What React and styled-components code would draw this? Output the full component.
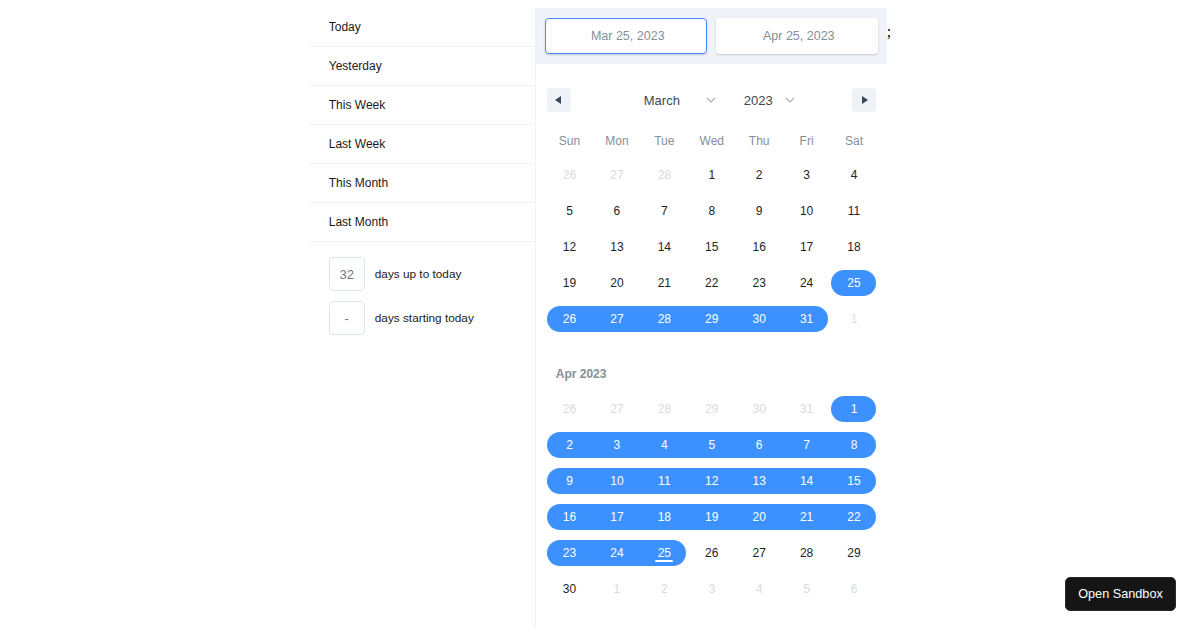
import React from "react";
import styled, { createGlobalStyle } from "styled-components";

const BLUE = "#3d91ff";

const GlobalStyle = createGlobalStyle`
  body {
    margin: 8px;
    background: #fff;
    font-family: "Liberation Sans", Arial, sans-serif;
  }
`;

const Page = styled.div`
  display: flex;
  justify-content: center;
  align-items: flex-start;
`;

const Picker = styled.div`
  display: flex;
  align-items: stretch;
`;

const Sidebar = styled.div`
  width: 226px;
  border-right: 1px solid #eff2f7;
  font-size: 12px;
`;

const StaticRange = styled.button`
  display: block;
  width: 100%;
  border: 0;
  border-bottom: 1px solid #eff2f7;
  background: #fff;
  padding: 10px 20px;
  text-align: left;
  font: inherit;
  line-height: 18px;
  color: #1a1a1a;
  cursor: pointer;
`;

const InputRanges = styled.div`
  padding: 10px 0;
`;

const InputRow = styled.div`
  display: flex;
  align-items: center;
  padding: 5px 20px;
`;

const RangeInput = styled.div`
  width: 36px;
  height: 34px;
  box-sizing: border-box;
  border: 1px solid #dee7eb;
  border-radius: 4px;
  display: flex;
  align-items: center;
  justify-content: center;
  color: #6f7b88;
  font-size: 13px;
  margin-right: 10px;
`;

const RangeLabel = styled.span`
  color: #1a1a1a;
  font-size: 11.8px;
`;

const Calendar = styled.div`
  width: 351px;
  font-size: 12px;
`;

const DateDisplay = styled.div`
  display: flex;
  gap: 9px;
  padding: 10px 9px;
  background: #eff2f7;
`;

const DateInput = styled.div`
  flex: 1;
  height: 36px;
  box-sizing: border-box;
  border: 1px solid ${(p) => (p.$active ? BLUE : "transparent")};
  border-radius: 4px;
  background: #fff;
  box-shadow: 0 1px 2px 0 rgba(35, 57, 66, 0.21);
  display: flex;
  align-items: center;
  justify-content: center;
  padding-left: 4px;
  color: #849095;
  font-size: 12.5px;
`;

const NavRow = styled.div`
  height: 61px;
  box-sizing: border-box;
  padding: 11px 11px 0;
  display: flex;
  align-items: center;
`;

const NavButton = styled.button`
  width: 24px;
  height: 24px;
  padding: 0;
  border: 0;
  border-radius: 4px;
  background: #eff2f7;
  display: flex;
  align-items: center;
  justify-content: center;
  cursor: pointer;

  i {
    display: block;
    width: 0;
    height: 0;
    border-style: solid;
    border-width: ${(p) => (p.$next ? "4px 0 4px 6px" : "4px 6px 4px 0")};
    border-color: ${(p) =>
      p.$next
        ? "transparent transparent transparent #34495e"
        : "transparent #34495e transparent transparent"};
    transform: translateX(${(p) => (p.$next ? "1px" : "-1px")});
  }
`;

const Pickers = styled.div`
  flex: 1;
  display: flex;
  justify-content: center;
  padding-left: 14px;
`;

const Select = styled.div`
  display: flex;
  align-items: center;
  padding: 10px 8px 10px 10px;
  margin: 0 5px;
  font-size: 13px;
  color: #3e484f;
`;

const SelectLabel = styled.span`
  width: ${(p) => p.$w}px;
`;

const WeekDays = styled.div`
  display: grid;
  grid-template-columns: repeat(7, 1fr);
  padding: 0 9px 0 10px;
`;

const WeekDay = styled.span`
  line-height: 32px;
  text-align: center;
  color: #849095;
`;

const Month = styled.div`
  padding: 0 9px 20px 10px;
`;

const MonthName = styled.div`
  padding: 10px 10px;
  line-height: 14px;
  font-weight: 600;
  color: #849095;
`;

const Days = styled.div`
  display: grid;
  grid-template-columns: repeat(7, 1fr);
`;

const Day = styled.div`
  position: relative;
  height: 36px;
  display: flex;
  align-items: center;
  justify-content: center;
`;

const Range = styled.span`
  position: absolute;
  top: 5px;
  bottom: 5px;
  left: ${(p) => (p.$start ? "1px" : "0")};
  right: ${(p) => (p.$end ? "2px" : "0")};
  background: ${BLUE};
  border-radius: ${(p) =>
    `${p.$start ? "13px" : "0"} ${p.$end ? "13px" : "0"} ${p.$end ? "13px" : "0"} ${
      p.$start ? "13px" : "0"
    }`};
`;

const DayNumber = styled.span`
  position: relative;
  color: ${(p) => (p.$passive ? "#d5dce0" : p.$selected ? "#fff" : "#1d2429")};

  &::after {
    content: "";
    display: ${(p) => (p.$today ? "block" : "none")};
    position: absolute;
    left: 50%;
    bottom: -2px;
    width: 18px;
    height: 2px;
    border-radius: 2px;
    transform: translateX(-50%);
    background: ${(p) => (p.$selected ? "#fff" : BLUE)};
  }
`;

const Semicolon = styled.span`
  font-family: "Liberation Serif", serif;
  font-size: 16px;
  line-height: 16px;
  margin-top: 16px;
`;

const SandboxButton = styled.button`
  position: fixed;
  right: 24px;
  bottom: 19px;
  width: 111px;
  height: 34px;
  padding: 0;
  border: 1px solid #2a2a2a;
  border-radius: 5px;
  background: #151515;
  color: #fff;
  font-family: "Liberation Sans", Arial, sans-serif;
  font-size: 12.7px;
  cursor: pointer;
`;

const staticRanges = ["Today", "Yesterday", "This Week", "Last Week", "This Month", "Last Month"];
const weekDays = ["Sun", "Mon", "Tue", "Wed", "Thu", "Fri", "Sat"];

// range runs from Mar 25 to Apr 25 2023, today is Apr 25
const buildMonth = (month, lead, length, leadStart, trail) => {
  const cells = [];
  for (let i = 0; i < lead; i++) cells.push({ n: leadStart + i, passive: true });
  for (let d = 1; d <= length; d++) cells.push({ n: d, month });
  for (let i = 1; i <= trail; i++) cells.push({ n: i, passive: true });
  return cells.map((c, i) => {
    if (c.passive) return c;
    const key = c.month * 100 + c.n;
    const selected = key >= 325 && key <= 425;
    const col = i % 7;
    return {
      ...c,
      selected,
      start: key === 325 || c.n === 1 || col === 0,
      end: key === 425 || c.n === length || col === 6,
      today: key === 425,
    };
  });
};

const march = buildMonth(3, 3, 31, 26, 1);
const april = buildMonth(4, 6, 30, 26, 6);

const DayGrid = ({ cells }) => (
  <Days>
    {cells.map((c, i) => (
      <Day key={i}>
        {c.selected && <Range $start={c.start} $end={c.end} />}
        <DayNumber $passive={c.passive} $selected={c.selected} $today={c.today}>
          {c.n}
        </DayNumber>
      </Day>
    ))}
  </Days>
);

const Chevron = () => (
  <svg width="10" height="6" viewBox="0 0 10 6" fill="none">
    <polyline points="1,1 5,5 9,1" stroke="#a9b2ba" strokeWidth="1.2" />
  </svg>
);

const App = () => {
  return (
    <>
      <GlobalStyle />
      <Page>
        <Picker>
          <Sidebar>
            {staticRanges.map((r) => (
              <StaticRange key={r}>{r}</StaticRange>
            ))}
            <InputRanges>
              <InputRow>
                <RangeInput>32</RangeInput>
                <RangeLabel>days up to today</RangeLabel>
              </InputRow>
              <InputRow>
                <RangeInput>-</RangeInput>
                <RangeLabel>days starting today</RangeLabel>
              </InputRow>
            </InputRanges>
          </Sidebar>
          <Calendar>
            <DateDisplay>
              <DateInput $active>Mar 25, 2023</DateInput>
              <DateInput>Apr 25, 2023</DateInput>
            </DateDisplay>
            <NavRow>
              <NavButton>
                <i />
              </NavButton>
              <Pickers>
                <Select>
                  <SelectLabel $w={62}>March</SelectLabel>
                  <Chevron />
                </Select>
                <Select>
                  <SelectLabel $w={41}>2023</SelectLabel>
                  <Chevron />
                </Select>
              </Pickers>
              <NavButton $next>
                <i />
              </NavButton>
            </NavRow>
            <WeekDays>
              {weekDays.map((d) => (
                <WeekDay key={d}>{d}</WeekDay>
              ))}
            </WeekDays>
            <Month>
              <DayGrid cells={march} />
            </Month>
            <Month>
              <MonthName>Apr 2023</MonthName>
              <DayGrid cells={april} />
            </Month>
          </Calendar>
        </Picker>
        <Semicolon>;</Semicolon>
      </Page>
      <SandboxButton>Open Sandbox</SandboxButton>
    </>
  );
};

export default App;
